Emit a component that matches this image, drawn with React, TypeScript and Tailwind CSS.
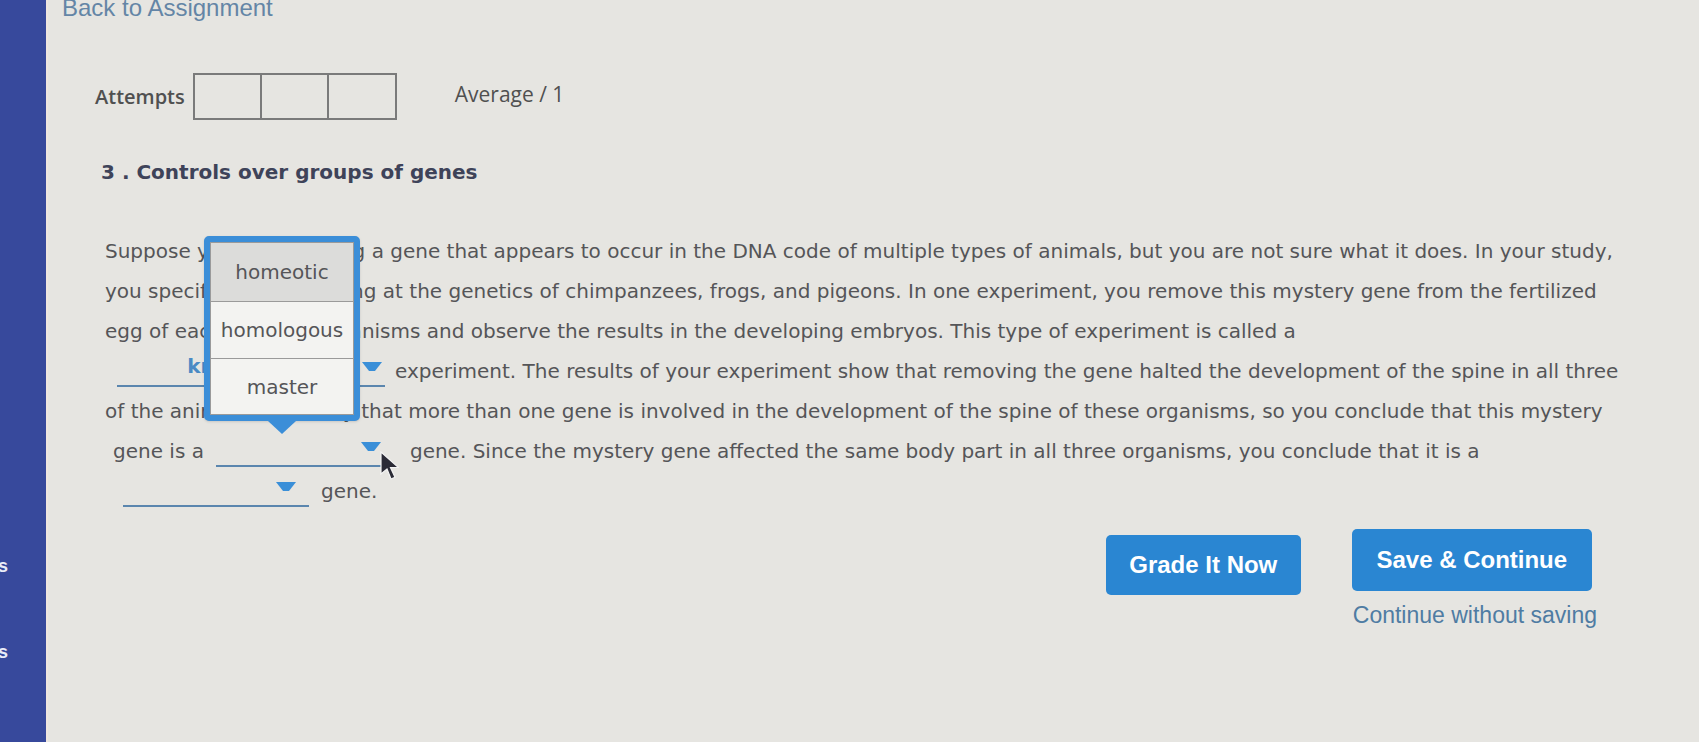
import React from "react";

const body = "font-['DejaVu_Sans','Verdana',sans-serif]";
const arial = "font-['Liberation_Sans','Arial',sans-serif]";
const open = "font-['Open_Sans','Liberation_Sans',sans-serif]";

function Caret() {
  return (
    <svg width="22" height="11" viewBox="0 0 22 11" className="shrink-0">
      <path d="M1 1h20l-7 9h-6z" fill="#3a8fd8" />
    </svg>
  );
}

function Blank({ className, value }: { className: string; value?: string }) {
  return (
    <span className={`inline-flex items-end h-[32px] border-b-2 border-[#5b86ae] pb-[4px] ${className}`}>
      <span className="flex-1 text-center font-bold text-[#4a8ac4]">{value}</span>
      <span className="self-start mt-[6px]">
        <Caret />
      </span>
    </span>
  );
}

function Cursor() {
  return (
    <svg width="20" height="30" viewBox="0 0 20 30" className="absolute left-[274px] top-[220px]">
      <path d="M2 1v22l6-5 4 10 4-1.8-4.5-9.7h8z" fill="#2b2b36" stroke="#f4f4f4" strokeWidth="1.2" />
    </svg>
  );
}

function Popup() {
  return (
    <div className="absolute left-[99px] top-[5px] w-[156px]">
      <div className="rounded-[5px] border-[6px] border-[#3b8ed8] bg-[#f3f3f1] shadow-sm">
        <div className="border border-[#9a9a9a]">
          <div className="h-[59px] flex items-center justify-center bg-[#dcdcda] border-b border-[#9a9a9a]">homeotic</div>
          <div className="h-[57px] flex items-center justify-center border-b border-[#9a9a9a]">homologous</div>
          <div className="h-[55px] flex items-center justify-center">master</div>
        </div>
      </div>
      <div className="mx-auto w-0 h-0 border-l-[14px] border-r-[14px] border-t-[13px] border-l-transparent border-r-transparent border-t-[#3b8ed8]" />
    </div>
  );
}

export default function App() {
  const line = "h-[40px] flex items-center whitespace-nowrap";
  return (
    <div className="flex h-[742px] w-full overflow-hidden bg-[#e6e5e1]">
      <aside className="w-[48px] shrink-0 bg-[#37499c] border-r-2 border-[#efe6e0] flex flex-col">
        <span className={`${arial} mt-[555px] -ml-[2px] text-[18px] leading-[22px] font-bold text-[#e8ecf8]`}>s</span>
        <span className={`${arial} mt-[64px] -ml-[2px] text-[18px] leading-[22px] font-bold text-[#e8ecf8]`}>s</span>
      </aside>

      <main className="flex-1 flex flex-col">
        <a className={`${arial} -mt-[6px] ml-[14px] text-[24px] leading-[28px] text-[#6485a6]`}>Back to Assignment</a>

        <div className={`${open} flex items-center mt-[51px] ml-[47px] text-[20px] text-[#505050]`}>
          <span className="font-semibold">Attempts</span>
          <div className="ml-[8px] flex border-2 border-[#7a7a7a]">
            <div className="w-[67px] h-[43px] border-r-2 border-[#7a7a7a]" />
            <div className="w-[67px] h-[43px] border-r-2 border-[#7a7a7a]" />
            <div className="w-[66px] h-[43px]" />
          </div>
          <span className="ml-[58px] -mt-[4px] text-[21px]">Average / 1</span>
        </div>

        <h2 className={`${body} mt-[38px] ml-[53px] text-[20px] leading-[28px] font-bold text-[#3e4359]`}>3 . Controls over groups of genes</h2>

        <div className={`${body} relative mt-[45px] ml-[57px] text-[20px] text-[#555558]`}>
          <div className={line}>Suppose you are studying a gene that appears to occur in the DNA code of multiple types of animals, but you are not sure what it does. In your study,</div>
          <div className={line}>you specifically are looking at the genetics of chimpanzees, frogs, and pigeons. In one experiment, you remove this mystery gene from the fertilized</div>
          <div className={line}>egg of each of these organisms and observe the results in the developing embryos. This type of experiment is called a</div>
          <div className={line}>
            <Blank className="ml-[12px] w-[268px] pr-[2px]" value="knockout" />
            <span className="ml-[10px]">experiment. The results of your experiment show that removing the gene halted the development of the spine in all three</span>
          </div>
          <div className={line}>of the animals. It is likely that more than one gene is involved in the development of the spine of these organisms, so you conclude that this mystery</div>
          <div className={line}>
            <span className="ml-[8px]">gene is a</span>
            <Blank className="ml-[12px] w-[166px]" />
            <span className="ml-[28px]">gene. Since the mystery gene affected the same body part in all three organisms, you conclude that it is a</span>
          </div>
          <div className={line}>
            <Blank className="ml-[18px] w-[186px] pr-[12px]" />
            <span className="ml-[12px]">gene.</span>
          </div>
          <Popup />
          <Cursor />
        </div>

        <div className="flex justify-end mr-[102px] mt-[18px] gap-[51px] items-start">
          <button className={`${arial} w-[195px] h-[60px] mt-[6px] rounded-[5px] bg-[#2a86d2] text-white text-[24px] font-bold`}>Grade It Now</button>
          <div className="flex flex-col">
            <button className={`${arial} w-[240px] h-[62px] rounded-[5px] bg-[#2a86d2] text-white text-[24px] font-bold`}>Save &amp; Continue</button>
            <a className={`${arial} mt-[10px] ml-[1px] text-[23px] leading-[28px] text-[#4f7ca3]`}>Continue without saving</a>
          </div>
        </div>
      </main>
    </div>
  );
}
